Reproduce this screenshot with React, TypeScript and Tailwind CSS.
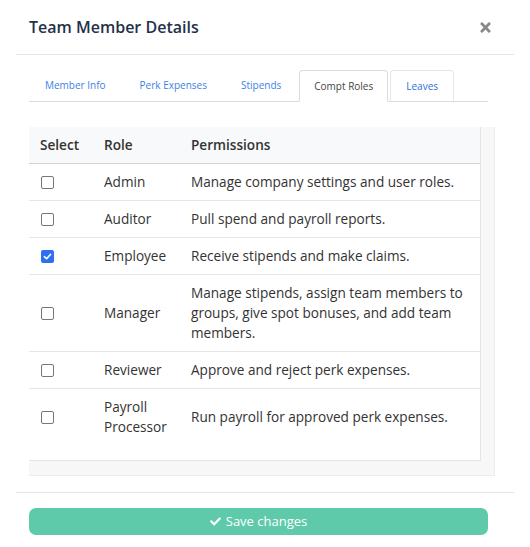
import React from 'react';
import { FaCheck, FaTimes } from 'react-icons/fa';

// Roles shown in the Compt Roles tab
const ROLES = [
  { role: 'Admin', permissions: 'Manage company settings and user roles.', checked: false },
  { role: 'Auditor', permissions: 'Pull spend and payroll reports.', checked: false },
  { role: 'Employee', permissions: 'Receive stipends and make claims.', checked: true },
  {
    role: 'Manager',
    permissions: 'Manage stipends, assign team members to groups, give spot bonuses, and add team members.',
    checked: false,
  },
  { role: 'Reviewer', permissions: 'Approve and reject perk expenses.', checked: false },
  { role: 'Payroll Processor', permissions: 'Run payroll for approved perk expenses.', checked: false },
];

const TABS = ['Member Info', 'Perk Expenses', 'Stipends', 'Compt Roles', 'Leaves'];
const ACTIVE_TAB = 'Compt Roles';

const Checkbox: React.FC<{ checked: boolean }> = ({ checked }) =>
  checked ? (
    <span className="flex h-[13px] w-[13px] items-center justify-center rounded-[2px] bg-[#2e6ef0]">
      <svg width="9" height="9" viewBox="0 0 10 10">
        <path d="M1.5 5.2 L4 7.5 L8.5 2.5" fill="none" stroke="#fff" strokeWidth="1.8" strokeLinecap="round" strokeLinejoin="round" />
      </svg>
    </span>
  ) : (
    <span className="block h-[13px] w-[13px] rounded-[2px] border border-[#767676] bg-white" />
  );

export default function App() {
  return (
    <div className="h-[547px] w-[530px] bg-white font-['Open_Sans',sans-serif] text-[#333]">
      {/* --- Header --- */}
      <div className="mx-4 flex h-[55px] items-center justify-between border-b border-[#e6e6e6] pl-[13px] pr-[21px]">
        <h1 className="text-[16px] font-semibold text-[#1f324a]">Team Member Details</h1>
        <FaTimes className="text-[#888]" size={15} />
      </div>

      {/* --- Tabs --- */}
      <div className="ml-[29px] mt-[15px] flex h-[32px] w-[459px] items-stretch border-b border-[#dcdcdc] text-[10px]">
        {TABS.map((tab) =>
          tab === ACTIVE_TAB ? (
            <div key={tab} className="-mb-px mr-[2px] flex items-center rounded-t-[4px] border border-b-white border-[#dcdcdc] bg-white px-[14px] text-[#444]">
              {tab}
            </div>
          ) : tab === 'Leaves' ? (
            <div key={tab} className="mr-[2px] flex items-center rounded-t-[4px] border border-b-0 border-[#e6e6e6] px-[15px] text-[#2f6fd3]">
              {tab}
            </div>
          ) : (
            <div key={tab} className="mr-[2px] flex items-center border border-transparent px-[15px] text-[#3c82e6]">
              {tab}
            </div>
          )
        )}
      </div>

      {/* --- Roles table (scroll box) --- */}
      <div className="ml-[29px] mt-[25px] h-[349px] w-[466px] border-r border-b border-[#ececec] bg-[#f7f7f7]">
        <div className="h-[334px] w-[452px] overflow-hidden border-r border-b border-[#e4e4e4] bg-white">
          <table className="w-full table-fixed border-collapse text-[13.6px] leading-[20px]">
            <colgroup>
              <col className="w-[64px]" />
              <col className="w-[87px]" />
              <col />
            </colgroup>
            <thead>
              <tr className="border-b border-[#cdd4d8] bg-[#f8f9fa] text-left">
                <th className="px-[11px] py-2 font-semibold">Select</th>
                <th className="px-[11px] py-2 font-semibold">Role</th>
                <th className="px-[11px] py-2 font-semibold">Permissions</th>
              </tr>
            </thead>
            <tbody>
              {ROLES.map((r, i) => (
                <tr key={r.role} className={i < ROLES.length - 1 ? 'border-b border-[#e6e6e6]' : ''}>
                  <td className="px-[12px] py-2 align-middle">
                    <Checkbox checked={r.checked} />
                  </td>
                  <td className="px-[11px] py-2 align-middle">{r.role}</td>
                  <td className="px-[11px] py-2 align-middle">{r.permissions}</td>
                </tr>
              ))}
            </tbody>
          </table>
        </div>
      </div>

      {/* --- Footer --- */}
      <div className="mx-4 mt-[16px] border-t border-[#e6e6e6] pt-[15px]">
        <button className="ml-[13px] flex h-[27px] w-[459px] items-center justify-center gap-[5px] rounded-[7px] bg-[#5ecaaa] text-[13px] text-white">
          <FaCheck size={11} />
          Save changes
        </button>
      </div>
    </div>
  );
}
